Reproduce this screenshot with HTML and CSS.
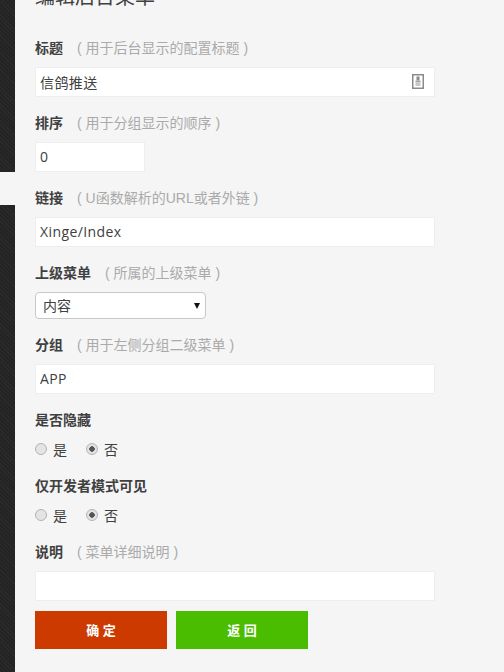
FILE: index.html
```html
<!DOCTYPE html>
<html lang="zh-cn">
<head>
<meta charset="UTF-8">
<title>编辑后台菜单</title>
<link rel="stylesheet" href="styles.css">
</head>
<body>
<div class="layout">
    <div class="side">
        <div class="side-top"></div>
        <div class="side-active"></div>
        <div class="side-bottom"></div>
    </div>
    <div class="main">
        <h2 class="page-title">编辑后台菜单</h2>
        <form class="form">
            <div class="item">
                <label class="item-label">标题<span class="hint">( 用于后台显示的配置标题 )</span></label>
                <div class="input-wrap">
                    <input type="text" class="text" value="信鸽推送">
                    <svg class="contact-icon" width="12" height="15" viewBox="0 0 12 15">
                        <rect x="0.75" y="0.75" width="10.5" height="13.5" fill="none" stroke="#8a8a8a" stroke-width="1.5"/>
                        <rect x="4.5" y="2.5" width="3" height="4" fill="#8a8a8a"/>
                        <rect x="3.5" y="6.5" width="5" height="2" fill="#a8a8a8"/>
                        <rect x="3.5" y="8.5" width="5" height="3.5" fill="#c8c8c8"/>
                    </svg>
                </div>
            </div>
            <div class="item">
                <label class="item-label">排序<span class="hint">( 用于分组显示的顺序 )</span></label>
                <input type="text" class="text small" value="0">
            </div>
            <div class="item">
                <label class="item-label">链接<span class="hint">( U函数解析的URL或者外链 )</span></label>
                <input type="text" class="text" value="Xinge/Index">
            </div>
            <div class="item">
                <label class="item-label">上级菜单<span class="hint">( 所属的上级菜单 )</span></label>
                <div class="select-wrap">
                    <select class="select"><option>内容</option></select>
                </div>
            </div>
            <div class="item">
                <label class="item-label">分组<span class="hint">( 用于左侧分组二级菜单 )</span></label>
                <input type="text" class="text" value="APP">
            </div>
            <div class="item">
                <label class="item-label">是否隐藏</label>
                <div class="radios">
                    <label class="radio"><span class="dot"></span>是</label>
                    <label class="radio"><span class="dot on"></span>否</label>
                </div>
            </div>
            <div class="item">
                <label class="item-label">仅开发者模式可见</label>
                <div class="radios">
                    <label class="radio"><span class="dot"></span>是</label>
                    <label class="radio"><span class="dot on"></span>否</label>
                </div>
            </div>
            <div class="item last">
                <label class="item-label">说明<span class="hint">( 菜单详细说明 )</span></label>
                <input type="text" class="text">
            </div>
            <div class="actions">
                <button type="button" class="btn submit">确 定</button>
                <button type="button" class="btn back">返 回</button>
            </div>
        </form>
    </div>
</div>
</body>
</html>
```
FILE: styles.css
```css
html, body {
    margin: 0;
    height: 672px;
    overflow: hidden;
}
body {
    background: #f5f5f5;
    color: #404040;
    font-family: "Liberation Sans", "Noto Sans CJK SC", sans-serif;
    font-size: 14px;
}
.layout {
    display: flex;
    height: 672px;
}

/* 左侧栏 */
.side {
    width: 15px;
    display: flex;
    flex-direction: column;
    flex: none;
}
.side-top, .side-bottom {
    background: repeating-linear-gradient(45deg, #2b2b2b 0, #2b2b2b 1px, #242424 1px, #242424 3px);
}
.side-top { height: 172px; }
.side-active { height: 33px; background: #f5f5f5; }
.side-bottom { flex: 1; }

.main {
    flex: 1;
    padding-left: 20px;
}
.page-title {
    margin: -15px 0 0 0;
    height: 53px;
    font-size: 20px;
    line-height: 24px;
    font-weight: normal;
    color: #404040;
}
.item {
    margin-bottom: 16px;
}
.item.last {
    margin-bottom: 10px;
}
.item-label {
    display: block;
    height: 20px;
    line-height: 20px;
    margin-bottom: 9px;
    font-size: 14px;
    font-weight: bold;
}
.hint {
    margin-left: 14px;
    font-weight: normal;
    color: #aaa;
}
.input-wrap {
    position: relative;
    width: 400px;
}
.text {
    display: block;
    box-sizing: border-box;
    width: 400px;
    height: 30px;
    padding: 0 4px 1px;
    border: 1px solid #eee;
    background: #fff;
    color: #404040;
    font-family: "Open Sans", "Noto Sans CJK SC", sans-serif;
    font-size: 14px;
    letter-spacing: 0.4px;
    outline: none;
}
.text.small {
    width: 110px;
}
.contact-icon {
    position: absolute;
    right: 11px;
    top: 7px;
}
.select-wrap {
    position: relative;
    width: 171px;
}
.select-wrap::after {
    content: "";
    position: absolute;
    right: 6px;
    top: 11px;
    border-left: 3px solid transparent;
    border-right: 3px solid transparent;
    border-top: 6px solid #111;
}
.select {
    display: block;
    box-sizing: border-box;
    width: 171px;
    height: 27px;
    padding: 0 7px;
    border: 1px solid #c8c8c8;
    border-radius: 4px;
    background: #fff;
    color: #404040;
    appearance: none;
    font-family: "Liberation Sans", "Noto Sans CJK SC", sans-serif;
    font-size: 14px;
}
.radios {
    display: flex;
    gap: 19px;
    height: 21px;
}
.radio {
    display: flex;
    align-items: center;
    gap: 6px;
    padding-bottom: 2px;
    font-size: 14px;
}
.dot {
    box-sizing: border-box;
    width: 12px;
    height: 12px;
    border: 1px solid #b4b4b4;
    border-radius: 50%;
    background: #e4e4e4;
}
.dot.on {
    background: radial-gradient(circle, #555 0, #555 2.5px, #e4e4e4 3px);
}
.actions {
    display: flex;
    gap: 9px;
}
.btn {
    width: 132px;
    height: 38px;
    border: none;
    padding: 0 0 2px;
    color: #fff;
    font-family: "Liberation Sans", "Noto Sans CJK SC", sans-serif;
    font-size: 13px;
    font-weight: bold;
}
.btn.submit { background: #cc3a00; }
.btn.back { background: #4bbd00; }
```
